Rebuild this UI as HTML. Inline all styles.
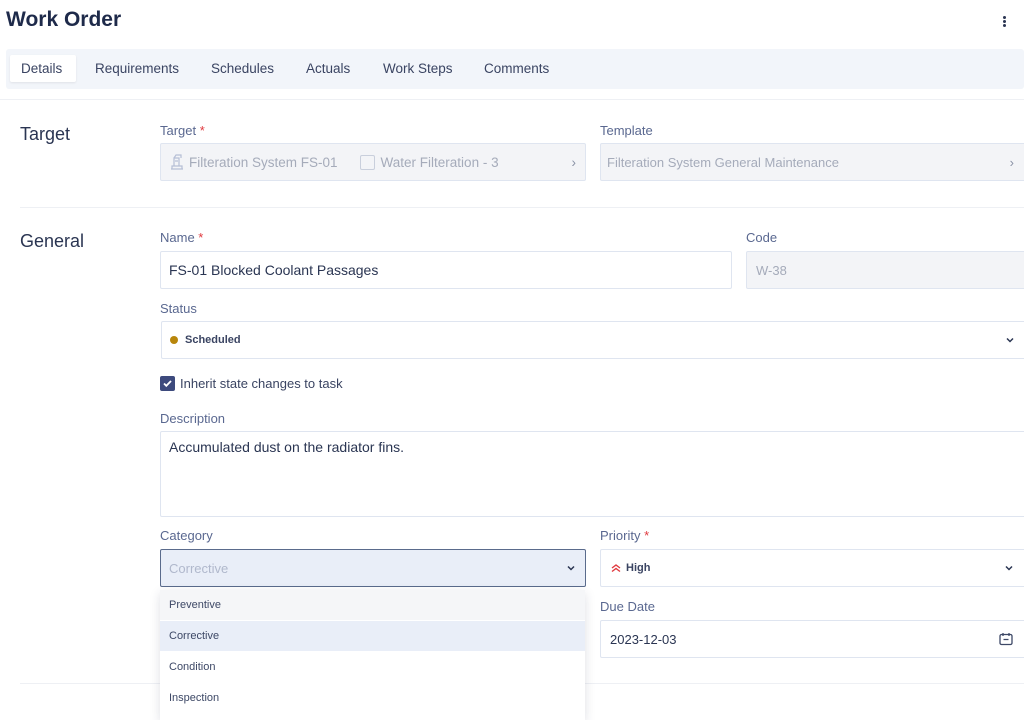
<!DOCTYPE html>
<html><head><style>
*{box-sizing:border-box;margin:0;padding:0}
body{width:1024px;height:708px;overflow:hidden;background:#fff;font-family:"Liberation Sans",sans-serif;color:#2a3552;position:relative}
.a{position:absolute}
.lbl{position:absolute;font-size:13px;color:#5a6890}
.req{color:#e0393e}
.in{position:absolute;border:1px solid #dfe5f0;border-radius:2px;background:#fff;font-size:14px;color:#2a3552;display:flex;align-items:center;padding-left:9px}
.dis{background:#f3f4f7;color:#a5abba}
.sec{position:absolute;left:20px;font-size:18px;color:#2a3552}
.hr{position:absolute;height:1px;background:#eef0f4}
.tab{position:absolute;top:55px;height:27px;font-size:13.5px;color:#3a4462;line-height:27px}
.opt{position:absolute;left:160px;width:425px;height:30px;font-size:11px;color:#3d4866;padding-left:9px;line-height:30px}
</style></head><body>
<div class="a" style="left:6px;top:8px;font-size:21px;font-weight:bold;color:#1e2a4a">Work Order</div>
<div class="a" style="left:1003px;top:16px;width:3px">
<div style="width:3px;height:3px;border-radius:50%;background:#2a3552;margin-bottom:1px"></div><div style="width:3px;height:3px;border-radius:50%;background:#2a3552;margin-bottom:1px"></div><div style="width:3px;height:3px;border-radius:50%;background:#2a3552"></div></div>
<div class="a" style="left:6px;top:49px;width:1018px;height:40px;background:#f2f5fa;border-radius:3px"></div>
<div class="a" style="left:10px;top:55px;width:66px;height:27px;background:#fff;border-radius:2px;box-shadow:0 1px 2px rgba(0,0,0,.08)"></div>
<div class="tab" style="left:21px">Details</div>
<div class="tab" style="left:95px">Requirements</div>
<div class="tab" style="left:211px">Schedules</div>
<div class="tab" style="left:306px">Actuals</div>
<div class="tab" style="left:383px">Work Steps</div>
<div class="tab" style="left:484px">Comments</div>
<div class="hr" style="left:0;top:99px;width:1024px"></div>

<div class="sec" style="top:124px">Target</div>
<div class="lbl" style="left:160px;top:123px">Target <span class="req">*</span></div>
<div class="in dis" style="left:160px;top:143px;width:426px;height:38px;font-size:13.5px;padding-left:7px">
<svg width="18" height="18" viewBox="0 0 18 18" style="margin-right:3px" fill="none" stroke="#b6bfd6" stroke-width="1.2"><path d="M3 16h12M4 16v-3h10v3M6 13V5h5v8M6 5l2-3h5v3M13 2v3M7 8h3"/></svg>
Filteration System FS-01
<span style="display:inline-block;width:15px;height:15px;border:1.5px solid #c9cfdc;border-radius:2px;margin:0 6px 0 22px"></span>Water Filteration - 3
<span style="position:absolute;right:9px;color:#8a92a6">›</span></div>
<div class="lbl" style="left:600px;top:123px">Template</div>
<div class="in dis" style="left:600px;top:143px;width:430px;height:38px;font-size:13px;padding-left:6px">Filteration System General Maintenance<span style="position:absolute;right:15px;color:#8a92a6">›</span></div>
<div class="hr" style="left:20px;top:207px;width:1004px"></div>

<div class="sec" style="top:231px">General</div>
<div class="lbl" style="left:160px;top:230px">Name <span class="req">*</span></div>
<div class="in" style="left:160px;top:251px;width:572px;height:38px;padding-left:8px">FS-01 Blocked Coolant Passages</div>
<div class="lbl" style="left:746px;top:230px">Code</div>
<div class="in dis" style="left:746px;top:251px;width:290px;height:38px;font-size:13px">W-38</div>
<div class="lbl" style="left:160px;top:301px">Status</div>
<div class="in" style="left:161px;top:321px;width:875px;height:38px;font-size:11px;padding-left:8px;font-weight:bold;color:#3a4462"><span style="width:8px;height:8px;border-radius:50%;background:#b8860b;margin-right:7px;display:inline-block"></span>Scheduled<span style="position:absolute;left:842px;top:12px"><svg width="12" height="12" viewBox="0 0 12 12"><path d="M3 4.5l3 3 3-3" stroke="#2a3552" stroke-width="1.5" fill="none"/></svg></span></div>
<div class="a" style="left:160px;top:376px;width:15px;height:15px;background:#3d4a7d;border-radius:2px"><svg width="15" height="15" viewBox="0 0 15 15"><path d="M4 7.5l2.3 2.3L11 5" stroke="#fff" stroke-width="1.8" fill="none"/></svg></div>
<div class="a" style="left:180px;top:376px;font-size:13px;color:#3a4462">Inherit state changes to task</div>
<div class="lbl" style="left:160px;top:411px">Description</div>
<div class="in" style="left:160px;top:431px;width:876px;height:86px;align-items:flex-start;padding-top:7px;padding-left:8px">Accumulated dust on the radiator fins.</div>

<div class="lbl" style="left:160px;top:528px">Category</div>
<div class="in" style="left:160px;top:549px;width:426px;height:38px;background:#e9eef8;border-color:#5a6b8c;color:#b0b8cc;font-size:13px;padding-left:8px">Corrective<span style="position:absolute;right:8px;top:12px"><svg width="12" height="12" viewBox="0 0 12 12"><path d="M3 4.5l3 3 3-3" stroke="#2a3552" stroke-width="1.5" fill="none"/></svg></span></div>
<div class="lbl" style="left:600px;top:528px">Priority <span class="req">*</span></div>
<div class="in" style="left:600px;top:549px;width:436px;height:38px;font-size:11px;font-weight:bold;color:#3a4462"><svg width="12" height="12" viewBox="0 0 12 12" style="margin-right:4px"><path d="M2 6l4-3 4 3M2 9.5l4-3 4 3" stroke="#e0393e" stroke-width="1.4" fill="none"/></svg>High<span style="position:absolute;left:402px;top:12px"><svg width="12" height="12" viewBox="0 0 12 12"><path d="M3 4.5l3 3 3-3" stroke="#2a3552" stroke-width="1.5" fill="none"/></svg></span></div>
<div class="lbl" style="left:600px;top:599px">Due Date</div>
<div class="in" style="left:600px;top:620px;width:436px;height:38px;font-size:13px">2023-12-03<span style="position:absolute;left:397px;top:10px"><svg width="16" height="16" viewBox="0 0 16 16" fill="none" stroke="#3d4866" stroke-width="1.3"><rect x="2" y="3.5" width="12" height="10" rx="1.5"/><path d="M5 2v3M11 2v3M5.5 8.5h5"/></svg></span></div>
<div class="hr" style="left:20px;top:683px;width:1004px"></div>

<div class="a" style="left:160px;top:590px;width:425px;height:130px;background:#fff;box-shadow:0 3px 10px rgba(40,50,80,.15)"></div>
<div class="opt" style="top:590px;background:#f5f6f8">Preventive</div>
<div class="opt" style="top:621px;background:#e9eef8">Corrective</div>
<div class="opt" style="top:652px">Condition</div>
<div class="opt" style="top:683px">Inspection</div>
</body></html>
